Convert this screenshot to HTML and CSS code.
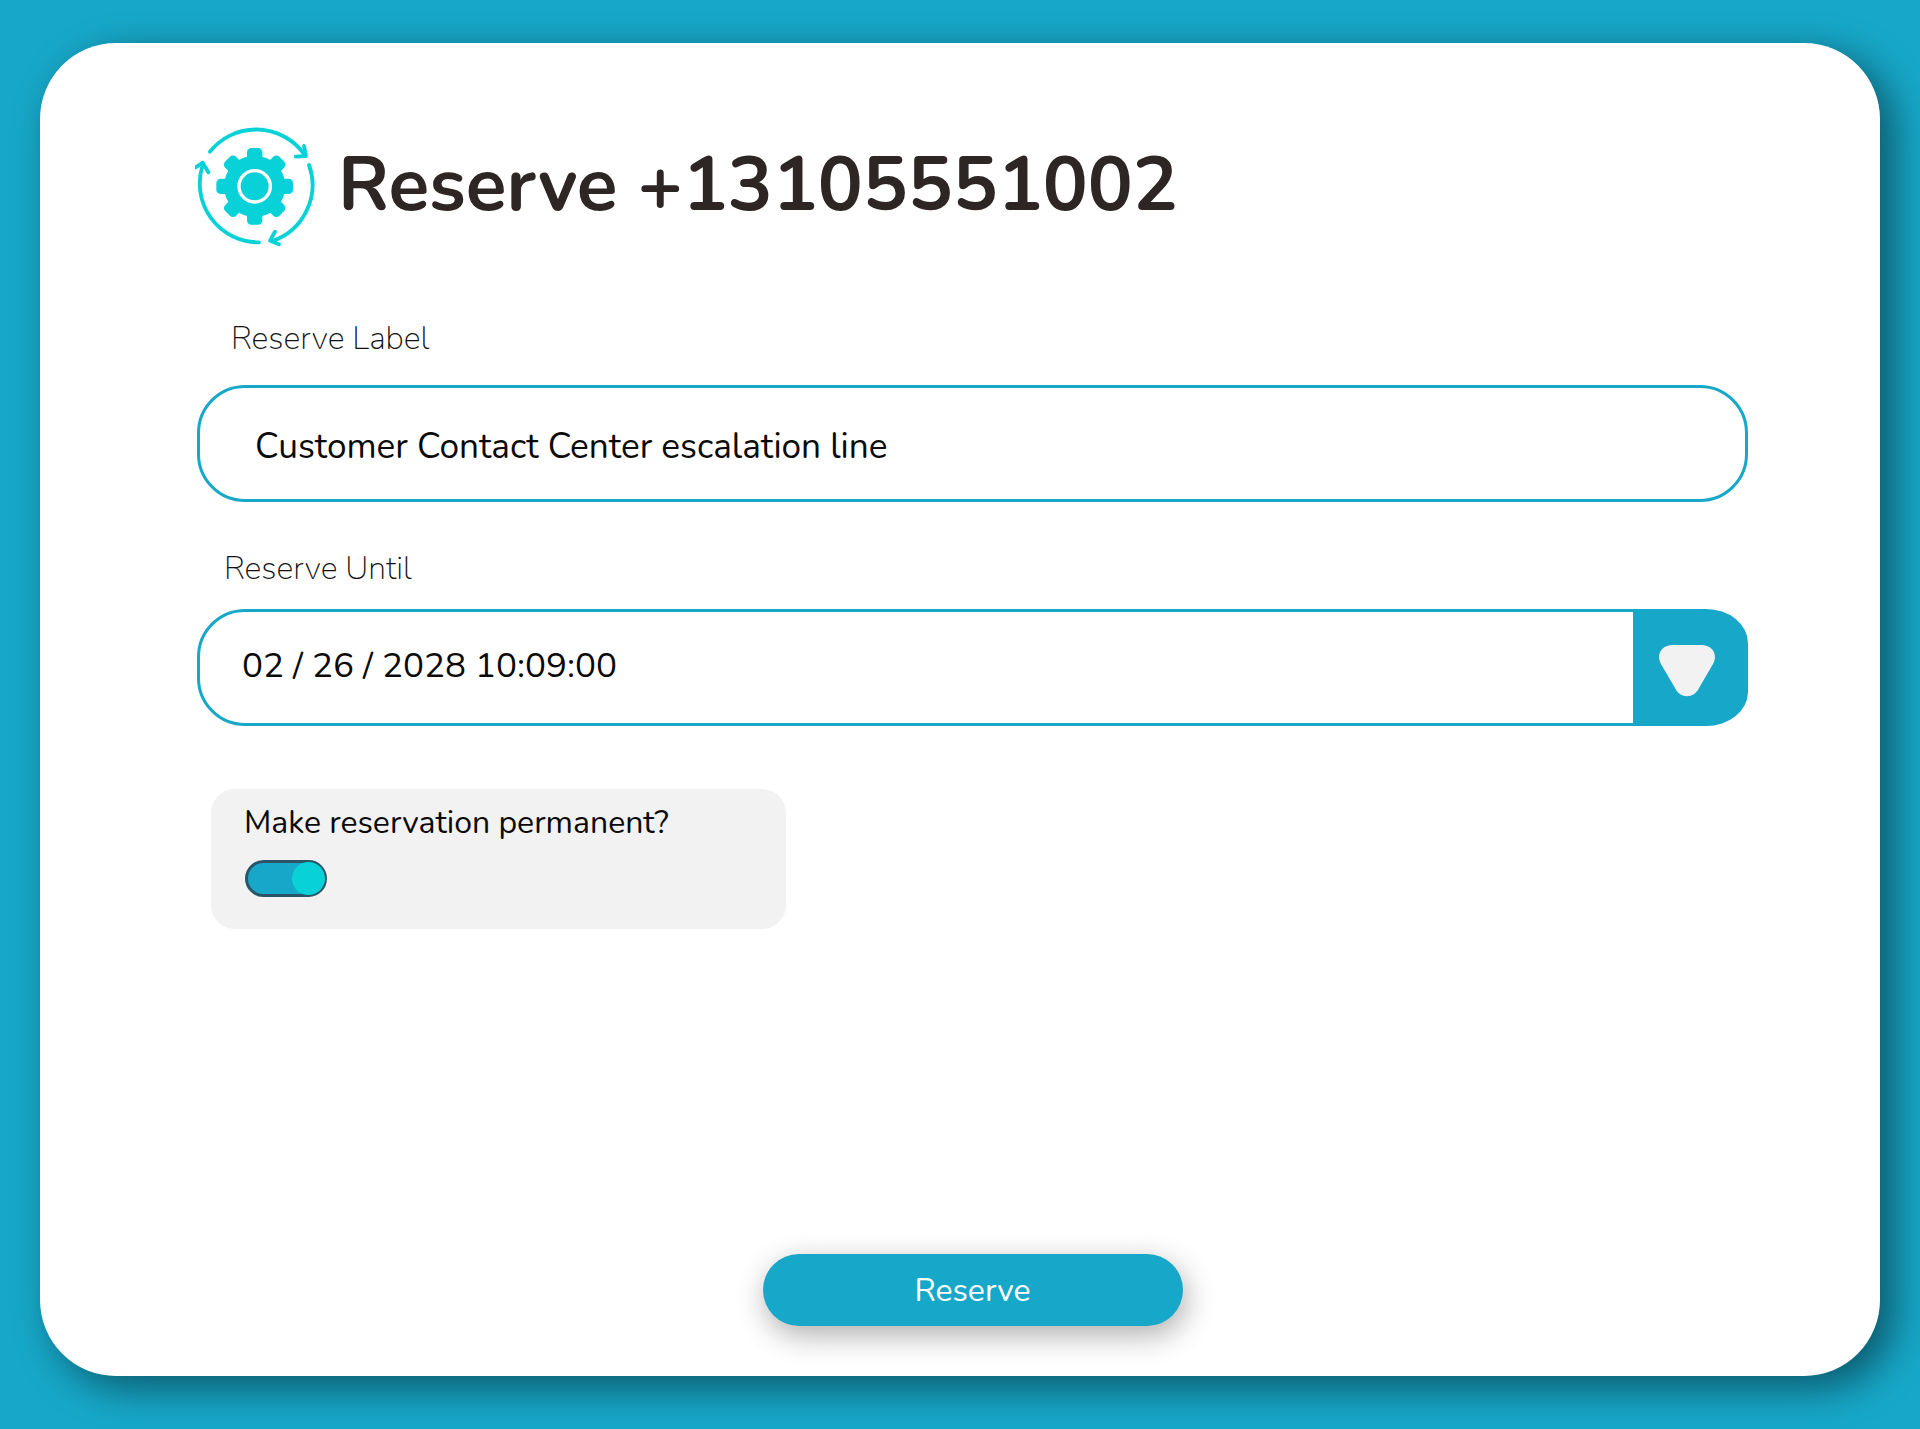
FILE: index.html
```html
<!DOCTYPE html>
<html lang="en">
<head>
<meta charset="utf-8">
<title>Reserve +13105551002</title>
<link rel="stylesheet" href="styles.css">
</head>
<body>
<main class="card">
  <header class="head">
    <svg class="logo" viewBox="45 51 360 360" aria-hidden="true">
      <g class="logo-lines">
        <path d="M90 125A177 177 0 0 1 372 132"/>
        <path d="M372 108L378 138L347 140"/>
        <path d="M387 165A177 177 0 0 1 276 393"/>
        <path d="M285 365L270 392L297 403"/>
        <path d="M237 397A177 177 0 0 1 68 165"/>
        <path d="M47 172L68 158L85 187"/>
      </g>
      <g class="logo-gear">
        <circle cx="224" cy="229" r="92"/>
        <rect x="201" y="114" width="46" height="46" rx="13"/>
        <rect x="201" y="114" width="46" height="46" rx="13" transform="rotate(45 224 229)"/>
        <rect x="201" y="114" width="46" height="46" rx="13" transform="rotate(90 224 229)"/>
        <rect x="201" y="114" width="46" height="46" rx="13" transform="rotate(135 224 229)"/>
        <rect x="201" y="114" width="46" height="46" rx="13" transform="rotate(180 224 229)"/>
        <rect x="201" y="114" width="46" height="46" rx="13" transform="rotate(225 224 229)"/>
        <rect x="201" y="114" width="46" height="46" rx="13" transform="rotate(270 224 229)"/>
        <rect x="201" y="114" width="46" height="46" rx="13" transform="rotate(315 224 229)"/>
      </g>
      <circle class="logo-ring" cx="224" cy="229" r="47"/>
    </svg>
    <h1 class="title">Reserve +13105551002</h1>
  </header>

  <form class="form">
    <label class="label label-first" for="reserve-label">Reserve Label</label>
    <div class="field">
      <input class="input input-first" id="reserve-label" type="text" value="Customer Contact Center escalation line">
    </div>

    <label class="label label-second" for="reserve-until">Reserve Until</label>
    <div class="field field-date">
      <input class="input input-second" id="reserve-until" type="text" value="02 / 26 / 2028 10:09:00">
      <span class="picker">
        <svg class="picker-icon" viewBox="0 0 58 54" aria-hidden="true">
          <path d="M15 1H43C55 1 60 11 55 20L41 44C36 55 22 55 17 44L3 20C-2 11 3 1 15 1Z"/>
        </svg>
      </span>
    </div>

    <div class="permanent">
      <span class="permanent-text">Make reservation permanent?</span>
      <span class="toggle"><span class="knob"></span></span>
    </div>

    <div class="actions">
      <button class="submit" type="button">Reserve</button>
    </div>
  </form>
</main>
</body>
</html>
```
FILE: styles.css
```css
* { box-sizing: border-box; }

html, body {
  margin: 0;
  height: 1429px;
  overflow: hidden;
}

body {
  background: #17a8c9;
  padding: 43px 40px 53px;
  font-family: "Nunito", "Open Sans", "Noto Sans", sans-serif;
  color: #111;
}

.card {
  width: 1840px;
  height: 1333px;
  background: #fff;
  border-radius: 76px;
  box-shadow: 14px 12px 40px rgba(0, 0, 0, 0.48);
  padding: 84px 132px 0 157px;
}

.head {
  display: flex;
  align-items: center;
  gap: 23px;
  height: 120px;
  margin-left: -2px;
}

.logo {
  width: 120px;
  height: 120px;
  flex: none;
}

.logo-lines {
  fill: none;
  stroke: #08d2d8;
  stroke-width: 11.5;
  stroke-linecap: round;
  stroke-linejoin: round;
}

.logo-gear { fill: #08d2d8; }

.logo-ring {
  fill: #08d2d8;
  stroke: #fff;
  stroke-width: 10;
}

.title {
  margin: -4px 0 0;
  font-size: 75px;
  font-weight: 700;
  color: #2d2624;
  white-space: nowrap;
}

.form {
  display: flex;
  flex-direction: column;
  margin-top: 72px;
}

.label {
  font-size: 32px;
  font-weight: 200;
  line-height: 40px;
  color: #111;
}

.label-first { margin-left: 34px; }
.label-second { margin-left: 27px; margin-top: 47px; }

.field {
  display: flex;
  margin-top: 26px;
  height: 117px;
  border: 3px solid #17a8c9;
  border-radius: 48px;
}

.field-date { margin-top: 20px; }

.input {
  flex: 1;
  min-width: 0;
  border: 0;
  outline: 0;
  background: transparent;
  font: inherit;
  font-size: 35px;
  color: #0a0a0a;
}

.input-first { padding: 4px 0 0 55px; font-size: 35.2px; }
.input-second { padding: 0 0 4px 42px; border-radius: 45px; }

.picker {
  display: flex;
  align-items: center;
  justify-content: center;
  width: 115px;
  margin: -3px -3px -3px 0;
  padding-right: 3px;
  background: #17a8c9;
  border-radius: 0 42px 42px 0 / 0 34px 34px 0;
  flex: none;
}

.picker-icon {
  width: 58px;
  height: 54px;
  margin: 6px 5px 0 0;
  fill: #f2f2f2;
}

.permanent {
  display: flex;
  flex-direction: column;
  align-items: flex-start;
  width: 575px;
  height: 140px;
  margin: 63px 0 0 14px;
  padding: 14px 0 0 33px;
  background: #f2f2f2;
  border-radius: 24px;
}

.permanent-text {
  font-size: 32px;
  line-height: 40px;
  color: #0a0a0a;
}

.toggle {
  display: flex;
  align-items: center;
  justify-content: flex-end;
  width: 82px;
  height: 37px;
  margin: 17px 0 0 1px;
  background: #17a8c9;
  border: 3px solid #2a5566;
  border-radius: 19px;
}

.knob {
  width: 33px;
  height: 33px;
  margin: -1px -1px -1px 0;
  border-radius: 50%;
  background: #08d2d8;
}

.actions {
  display: flex;
  justify-content: center;
  margin-top: 325px;
}

.submit {
  width: 420px;
  height: 72px;
  border: 0;
  border-radius: 36px;
  background: #17a8c9;
  color: #fff;
  font: inherit;
  font-size: 32px;
  box-shadow: 3px 9px 30px rgba(0, 0, 0, 0.32);
}
```
